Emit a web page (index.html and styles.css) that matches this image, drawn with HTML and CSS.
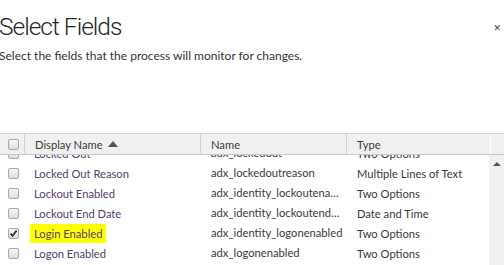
FILE: index.html
```html
<!DOCTYPE html>
<html>
<head>
<meta charset="utf-8">
<link rel="stylesheet" href="styles.css">
</head>
<body>
<div class="dialog">
  <div class="top">
    <h1 class="title">Select Fields</h1>
    <span class="close">&#x2715;</span>
  </div>
  <p class="subtitle">Select the fields that the process will monitor for changes.</p>
  <div class="grid">
    <div class="head">
      <div class="cell chk"><span class="box"></span></div>
      <div class="cell hd">Display Name <span class="sort"></span></div>
      <div class="cell hd">Name</div>
      <div class="cell hd">Type</div>
      <div class="cell hd last"></div>
    </div>
    <div class="bodywrap">
      <div class="rowsclip">
        <div class="rows">
          <div class="row"><div class="cell chk"><span class="box"></span></div><div class="cell dn">Locked Out</div><div class="cell nm">adx_lockedout</div><div class="cell tp">Two Options</div></div>
          <div class="row"><div class="cell chk"><span class="box"></span></div><div class="cell dn">Locked Out Reason</div><div class="cell nm">adx_lockedoutreason</div><div class="cell tp">Multiple Lines of Text</div></div>
          <div class="row"><div class="cell chk"><span class="box"></span></div><div class="cell dn">Lockout Enabled</div><div class="cell nm">adx_identity_lockoutenabled</div><div class="cell tp">Two Options</div></div>
          <div class="row"><div class="cell chk"><span class="box"></span></div><div class="cell dn">Lockout End Date</div><div class="cell nm">adx_identity_lockoutenddate</div><div class="cell tp">Date and Time</div></div>
          <div class="row"><div class="cell chk"><span class="box checked"><svg viewBox="0 0 11 11" width="11" height="11"><path d="M2.5 5.5 L4.5 7.8 L8.6 2.6" fill="none" stroke="#333" stroke-width="1.8"/></svg></span></div><div class="cell dn"><span class="hl">Login Enabled</span></div><div class="cell nm">adx_identity_logonenabled</div><div class="cell tp">Two Options</div></div>
          <div class="row"><div class="cell chk"><span class="box"></span></div><div class="cell dn">Logon Enabled</div><div class="cell nm">adx_logonenabled</div><div class="cell tp">Two Options</div></div>
        </div>
      </div>
      <div class="scroll"><span class="arrow"></span></div>
    </div>
  </div>
</div>
</body>
</html>
```
FILE: styles.css
```css
html, body {
  margin: 0;
  padding: 0;
  background: #fff;
}
body {
  width: 504px;
  height: 265px;
  overflow: hidden;
  font-family: "Lato", "Open Sans", sans-serif;
}
.dialog {
  display: flex;
  flex-direction: column;
}
.top {
  display: flex;
  justify-content: space-between;
  align-items: flex-start;
  height: 47px;
}
.title {
  margin: 11px 0 0 -1px;
  font-family: "Roboto", sans-serif;
  font-size: 24.5px;
  font-weight: 300;
  letter-spacing: -1px;
  line-height: 32px;
  color: #262626;
}
.close {
  margin: 22px 3px 0 0;
  font-size: 9px;
  line-height: 12px;
  color: #444;
  font-family: "DejaVu Sans", sans-serif;
}
.subtitle {
  margin: 0 0 0 -1px;
  font-size: 12px;
  line-height: 18px;
  color: #333;
  height: 86px;
}
.grid {
  display: flex;
  flex-direction: column;
}
.head {
  display: grid;
  grid-template-columns: 24px 176px 146px 144px 14px;
  height: 20px;
  background: #f0f0f0;
  border-top: 1px solid #d6d6d6;
  border-bottom: 1px solid #c8c8c8;
}
.cell {
  display: flex;
  align-items: center;
  font-size: 11.2px;
  white-space: nowrap;
  overflow: hidden;
}
.hd {
  border-left: 1px solid #d4d4d4;
  padding-left: 10px;
  color: #3a3a3a;
}
.last {
  border-left: 1px solid #fff;
}
.chk {
  justify-content: flex-start;
  padding-left: 8px;
}
.box {
  display: block;
  width: 9px;
  height: 9px;
  border: 1px solid #a8a8a8;
  border-radius: 2px;
  background: linear-gradient(#f6f6f6, #dedede);
  position: relative;
}
.box svg {
  position: absolute;
  left: -1px;
  top: -1px;
}
.sort {
  display: inline-block;
  width: 0;
  height: 0;
  margin-left: 5px;
  border-left: 5px solid transparent;
  border-right: 5px solid transparent;
  border-bottom: 6px solid #555;
}
.bodywrap {
  display: flex;
  height: 110px;
}
.rowsclip {
  width: 489px;
  overflow: hidden;
}
.rows {
  margin-top: -12px;
}
.row {
  display: grid;
  grid-template-columns: 24px 176px 146px 143px;
  height: 20px;
}
.dn {
  padding-left: 10px;
  color: #54406f;
}
.nm {
  padding-left: 11px;
  color: #3a3a3a;
  display: block;
  line-height: 20px;
  text-overflow: ellipsis;
  padding-right: 3px;
}
.tp {
  padding-left: 11px;
  color: #3a3a3a;
}
.hl {
  background: #ffff00;
  padding: 3px 4px 3px 4px;
  margin-left: -4px;
}
.scroll {
  width: 15px;
  background: #f0f0f0;
  position: relative;
}
.arrow {
  position: absolute;
  left: 4px;
  top: 7px;
  width: 0;
  height: 0;
  border-left: 4px solid transparent;
  border-right: 4px solid transparent;
  border-bottom: 4px solid #555;
}
```
